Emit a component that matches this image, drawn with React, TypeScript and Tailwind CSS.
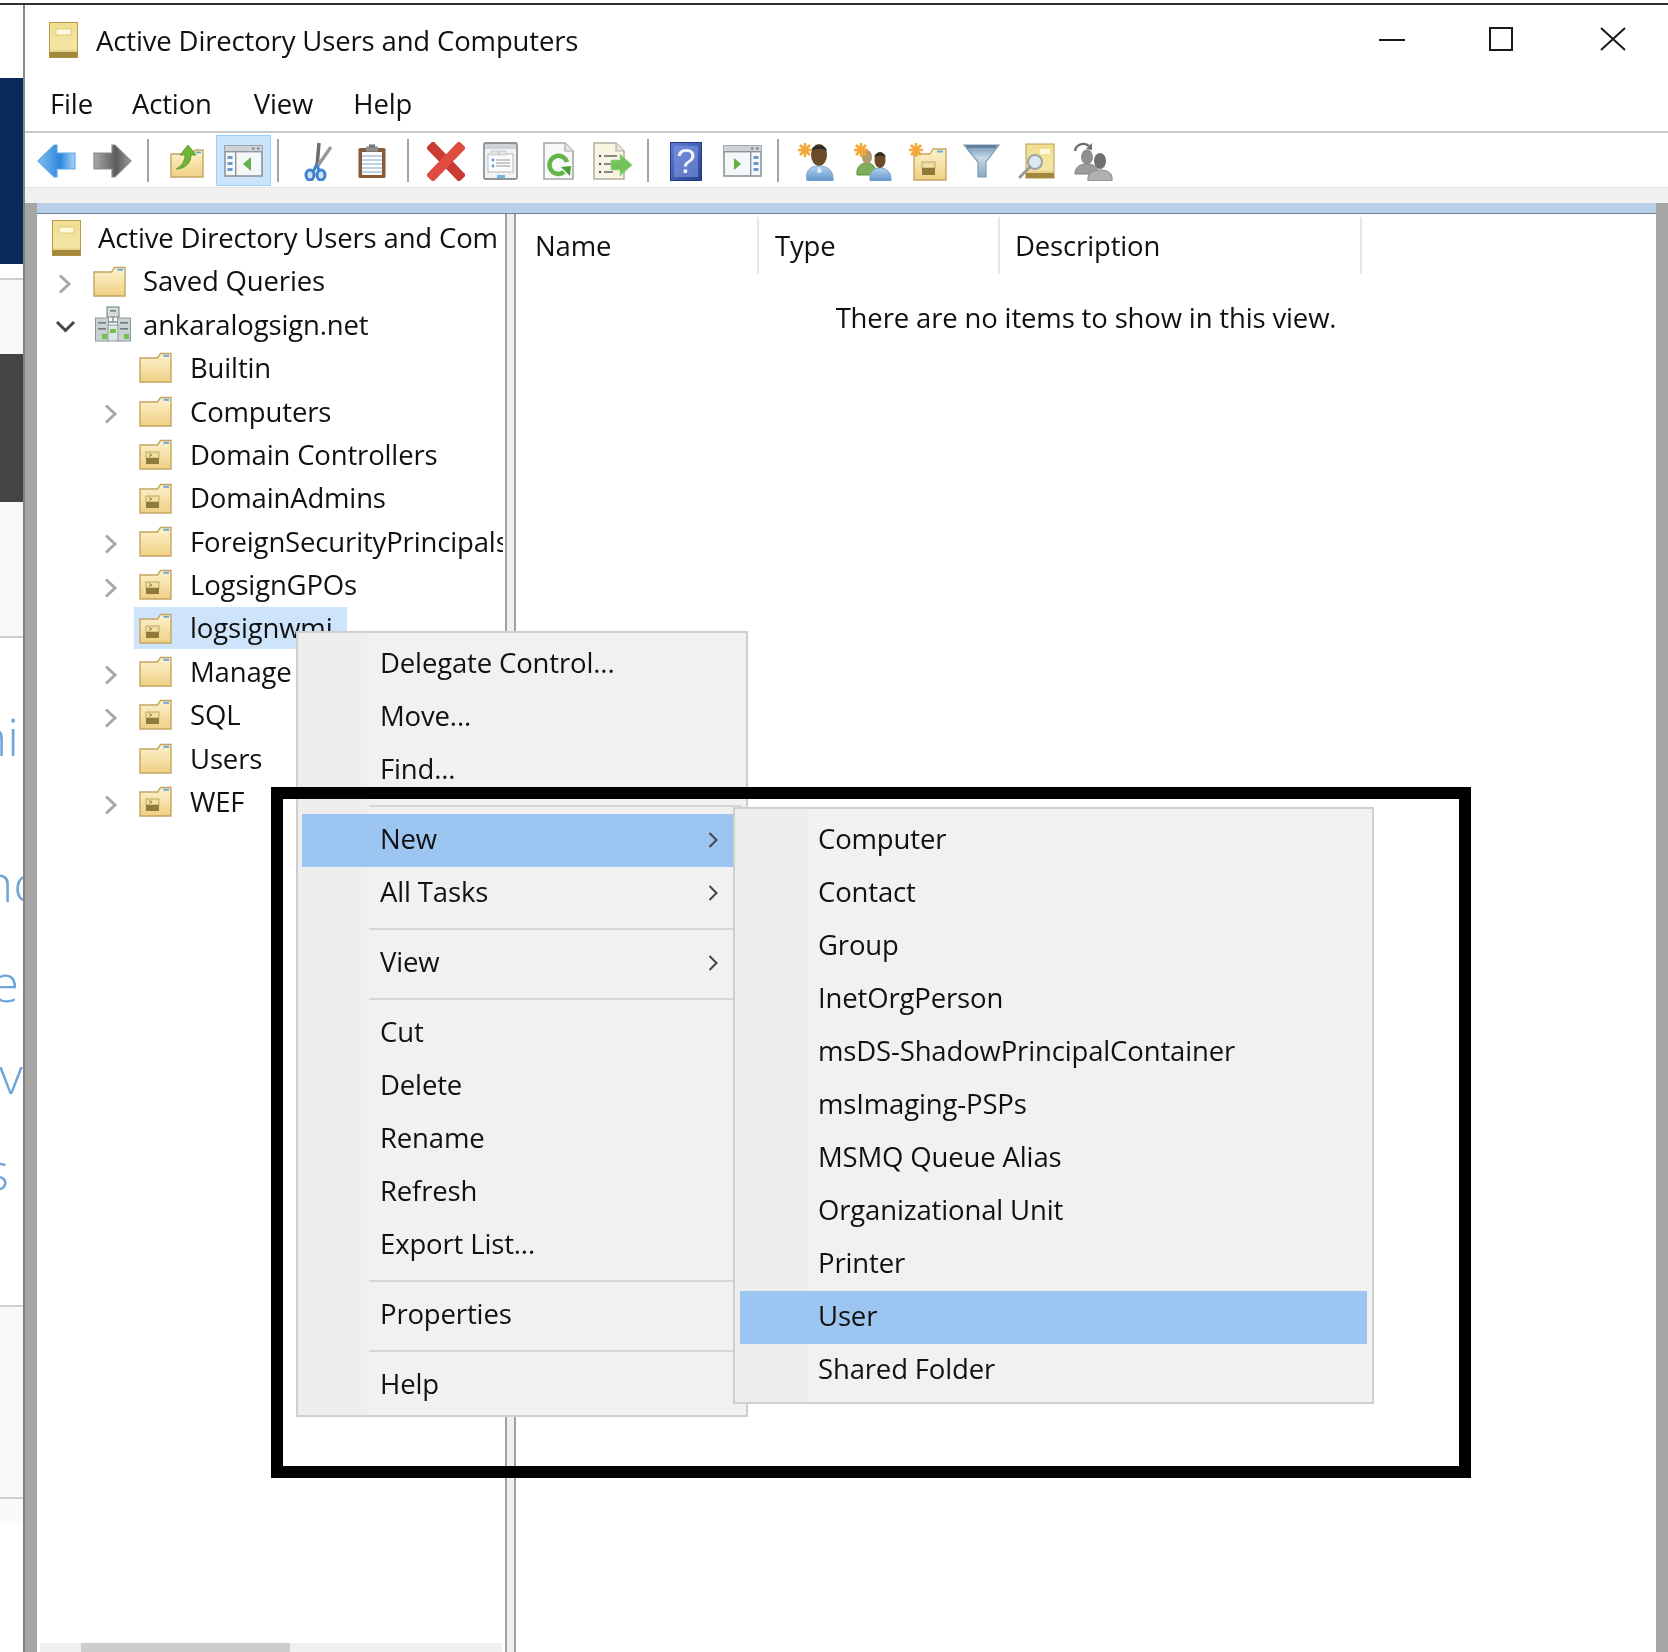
import React from "react"

type IconProps = { className?: string }

function Defs() {
  return (
    <svg className="absolute w-0 h-0">
      <defs>
        <linearGradient id="gFolder" x1="0" y1="0" x2="0" y2="1">
          <stop offset="0" stopColor="#fdf3cf" />
          <stop offset="1" stopColor="#f0d084" />
        </linearGradient>
        <linearGradient id="gBook" x1="0" y1="0" x2="0" y2="1">
          <stop offset="0" stopColor="#f0df90" />
          <stop offset="0.75" stopColor="#f4e6a6" />
          <stop offset="1" stopColor="#c9a84a" />
        </linearGradient>
        <linearGradient id="gBlue" x1="0" y1="0" x2="1" y2="0">
          <stop offset="0" stopColor="#7fbcf0" />
          <stop offset="0.6" stopColor="#2f86dc" />
          <stop offset="1" stopColor="#a8d4f7" />
        </linearGradient>
        <linearGradient id="gGray" x1="0" y1="0" x2="1" y2="0">
          <stop offset="0" stopColor="#a8a8a8" />
          <stop offset="0.6" stopColor="#5c5c5c" />
          <stop offset="1" stopColor="#9a9a9a" />
        </linearGradient>
        <linearGradient id="gBody" x1="0" y1="0" x2="0" y2="1">
          <stop offset="0" stopColor="#b5d4ef" />
          <stop offset="1" stopColor="#5f94c9" />
        </linearGradient>
        <linearGradient id="gSteel" x1="0" y1="0" x2="0" y2="1">
          <stop offset="0" stopColor="#6f93b4" />
          <stop offset="0.4" stopColor="#c6d9e8" />
          <stop offset="1" stopColor="#8aa7c0" />
        </linearGradient>
        <linearGradient id="gHelp" x1="0" y1="0" x2="1" y2="1">
          <stop offset="0" stopColor="#5e7fd8" />
          <stop offset="1" stopColor="#27408f" />
        </linearGradient>
      </defs>
    </svg>
  )
}

function Folder({ ou, className = "" }: { ou?: boolean; className?: string }) {
  return (
    <svg viewBox="0 0 33 31" className={`w-[33px] h-[31px] shrink-0 ${className}`}>
      <path d="M1 30V6H18.5L21.5 1.5H32V30Z" fill="url(#gFolder)" stroke="#c4a561" strokeWidth="1.4" />
      <rect x="24.5" y="2.8" width="5.5" height="2" fill="#6aa9dc" />
      {ou && (
        <>
          <rect x="7" y="13" width="13" height="6" fill="#efe0a4" stroke="#b39a52" strokeWidth="0.8" />
          <rect x="7" y="19" width="13" height="6" fill="#8f7a3c" />
          <path d="M10 14.5L13 16L10 17.5" fill="none" stroke="#8f7a3c" strokeWidth="0.9" />
        </>
      )}
    </svg>
  )
}

function BookIcon({ className = "" }: IconProps) {
  return (
    <svg viewBox="0 0 29 36" className={`w-[29px] h-[36px] shrink-0 ${className}`}>
      <rect x="0.5" y="0.5" width="28" height="35" fill="url(#gBook)" stroke="#b89b4a" />
      <rect x="0.5" y="30" width="28" height="5.5" fill="#a3873c" />
      <rect x="7" y="7" width="15" height="6" fill="#fff9de" stroke="#d8c270" strokeWidth="0.8" />
    </svg>
  )
}

function DomainIcon() {
  return (
    <svg viewBox="0 0 36 36" className="w-[36px] h-[36px] shrink-0">
      <path d="M18 10V16M6 16H30V20M6 16V20" fill="none" stroke="#7d8a8a" strokeWidth="1.4" />
      <rect x="12" y="1" width="12" height="10" fill="#d5dcdc" stroke="#6f7c7c" />
      <rect x="15" y="4" width="6" height="1.6" fill="#6f7c7c" />
      <rect x="0.5" y="12" width="13" height="23" fill="#c9d2d2" stroke="#8c9898" />
      <rect x="22.5" y="12" width="13" height="23" fill="#c9d2d2" stroke="#8c9898" />
      <rect x="13" y="19" width="10" height="16" fill="#dfe5e5" stroke="#8c9898" />
      <rect x="3" y="16" width="8" height="1.6" fill="#6f7c7c" />
      <rect x="25" y="16" width="8" height="1.6" fill="#6f7c7c" />
      <rect x="3" y="22" width="8" height="1.6" fill="#6f7c7c" />
      <rect x="25" y="22" width="8" height="1.6" fill="#6f7c7c" />
      <rect x="7" y="28" width="5" height="5" fill="#71c24d" />
      <rect x="15" y="23" width="6" height="4" fill="#71c24d" />
      <rect x="29" y="28" width="5" height="5" fill="#71c24d" />
    </svg>
  )
}

function BackIcon({ className = "" }: IconProps) {
  return (
    <svg viewBox="0 0 39 34" className={`w-[39px] h-[34px] shrink-0 ${className}`}>
      <path d="M1 17L17 1H20V9H38V25H20V33H17Z" fill="url(#gBlue)" stroke="#63a8e6" strokeWidth="1.2" />
    </svg>
  )
}

function ForwardIcon({ className = "" }: IconProps) {
  return (
    <svg viewBox="0 0 39 34" className={`w-[39px] h-[34px] shrink-0 ${className}`}>
      <path d="M38 17L22 1H19V9H1V25H19V33H22Z" fill="url(#gGray)" stroke="#8a8a8a" strokeWidth="1.2" />
    </svg>
  )
}

function UpFolderIcon({ className = "" }: IconProps) {
  return (
    <svg viewBox="0 0 34 34" className={`w-[34px] h-[34px] shrink-0 ${className}`}>
      <path d="M1 33V10H22L25 6H33V33Z" fill="url(#gFolder)" stroke="#c4a561" strokeWidth="1.4" />
      <rect x="26" y="7.5" width="5" height="1.8" fill="#6aa9dc" />
      <path d="M6 25C12 22 15 17 15 11H10L18 1L26 11H21C21 19 15 25 6 25Z" fill="#6fb536" stroke="#4f9426" strokeWidth="0.8" />
    </svg>
  )
}

function PaneIcon({ flip, className = "" }: { flip?: boolean; className?: string }) {
  return (
    <svg viewBox="0 0 39 32" className={`w-[39px] h-[32px] shrink-0 ${className}`}>
      <rect x="1" y="1" width="37" height="30" fill="#f6f7f8" stroke="#8e9499" strokeWidth="1.6" />
      <rect x="1" y="1" width="37" height="5" fill="#cfd3d6" />
      <rect x="28" y="2.5" width="2.5" height="2" fill="#7d8388" />
      <rect x="33" y="2.5" width="2.5" height="2" fill="#7d8388" />
      <rect x="1" y="6" width="37" height="1.4" fill="#8e9499" />
      {flip ? (
        <>
          <rect x="27" y="7" width="1.4" height="24" fill="#8e9499" />
          <rect x="30.5" y="11" width="5" height="3" fill="#6b9ad0" />
          <rect x="30.5" y="17" width="5" height="3" fill="#6b9ad0" />
          <rect x="30.5" y="23" width="5" height="3" fill="#6b9ad0" />
          <path d="M11 13L18 19L11 25Z" fill="#62b347" />
        </>
      ) : (
        <>
          <rect x="11" y="7" width="1.4" height="24" fill="#8e9499" />
          <rect x="3.5" y="11" width="5" height="3" fill="#6b9ad0" />
          <rect x="3.5" y="17" width="5" height="3" fill="#6b9ad0" />
          <rect x="3.5" y="23" width="5" height="3" fill="#6b9ad0" />
          <path d="M27 12L19 19L27 26Z" fill="#62b347" />
        </>
      )}
    </svg>
  )
}

function ScissorsIcon({ className = "" }: IconProps) {
  return (
    <svg viewBox="0 0 28 39" className={`w-[28px] h-[39px] shrink-0 ${className}`}>
      <path d="M15 1L13 24" stroke="#6d6d6d" strokeWidth="3.5" />
      <path d="M27 5L13 25" stroke="#9a9a9a" strokeWidth="3.5" />
      <path d="M13 22L9 30" stroke="#3f83cf" strokeWidth="3" />
      <path d="M12 22L16 30" stroke="#3f83cf" strokeWidth="3" />
      <ellipse cx="6" cy="33" rx="4" ry="5" fill="#cfe3f6" stroke="#3f83cf" strokeWidth="3" />
      <ellipse cx="17" cy="33" rx="4" ry="5" fill="#cfe3f6" stroke="#3f83cf" strokeWidth="3" />
    </svg>
  )
}

function ClipboardIcon({ className = "" }: IconProps) {
  return (
    <svg viewBox="0 0 30 35" className={`w-[30px] h-[35px] shrink-0 ${className}`}>
      <rect x="1.5" y="4" width="27" height="30" fill="#8a5a36" rx="1.5" />
      <rect x="5" y="8" width="20" height="23" fill="#fbfcfd" />
      <path d="M5 12H25M5 16H25M5 20H25M5 24H25M5 28H25" stroke="#a9c4dc" strokeWidth="1.6" />
      <rect x="9" y="2.5" width="12" height="5" fill="#8b8f92" />
      <rect x="12" y="0.5" width="6" height="3" fill="#6f7376" />
    </svg>
  )
}

function DeleteIcon({ className = "" }: IconProps) {
  return (
    <svg viewBox="0 0 38 39" className={`w-[38px] h-[39px] shrink-0 ${className}`}>
      <path d="M6 6L32 33" stroke="#c93b33" strokeWidth="10" strokeLinecap="square" />
      <path d="M32 6L6 33" stroke="#df4c42" strokeWidth="10" strokeLinecap="square" />
    </svg>
  )
}

function PropertiesIcon({ className = "" }: IconProps) {
  return (
    <svg viewBox="0 0 35 38" className={`w-[35px] h-[38px] shrink-0 ${className}`}>
      <rect x="1" y="1" width="33" height="36" rx="1.5" fill="#f1f2f3" stroke="#8f9498" strokeWidth="1.8" />
      <rect x="2" y="2" width="31" height="5" fill="#cfd3d6" />
      <rect x="5" y="12" width="25" height="18" fill="#fcfcfc" stroke="#b4b8bb" />
      <rect x="8" y="9" width="7" height="4" fill="#e3e5e7" stroke="#b4b8bb" strokeWidth="0.6" />
      <rect x="16" y="9" width="7" height="4" fill="#e3e5e7" stroke="#b4b8bb" strokeWidth="0.6" />
      <circle cx="10" cy="18" r="1.4" fill="#4c9ddd" />
      <circle cx="10" cy="24" r="1.4" fill="#4c9ddd" />
      <path d="M13 18H27M13 21H27M13 24H27" stroke="#8f9498" strokeWidth="1.2" />
      <rect x="14" y="33" width="8" height="3" fill="#6eb7e8" />
    </svg>
  )
}

function RefreshIcon({ className = "" }: IconProps) {
  return (
    <svg viewBox="0 0 31 38" className={`w-[31px] h-[38px] shrink-0 ${className}`}>
      <path d="M1 1H22L30 9V37H1Z" fill="#f7f8f7" stroke="#a4a8a6" strokeWidth="1.6" />
      <path d="M22 1V9H30" fill="#e7e9e8" stroke="#a4a8a6" strokeWidth="1.2" />
      <path d="M21 30A9 9 0 1 1 24 20" fill="none" stroke="#63b547" strokeWidth="4.5" />
      <path d="M18 25L28 24L27 34Z" fill="#4f9f38" />
    </svg>
  )
}

function ExportIcon({ className = "" }: IconProps) {
  return (
    <svg viewBox="0 0 40 38" className={`w-[40px] h-[38px] shrink-0 ${className}`}>
      <path d="M1 1H23L31 9V37H1Z" fill="#fbf6e3" stroke="#b0aea2" strokeWidth="1.5" />
      <path d="M23 1V9H31" fill="#eee8d0" stroke="#b0aea2" strokeWidth="1.2" />
      <path d="M6 14H8M6 22H8M6 30H8" stroke="#4a4a4a" strokeWidth="2" />
      <path d="M11 14H24M11 22H20M11 30H20" stroke="#8a8a80" strokeWidth="1.8" />
      <path d="M18 18H27V12L39 23L27 34V28H18Z" fill="#72c45a" stroke="#9ad98a" strokeWidth="0.8" />
    </svg>
  )
}

function HelpIcon({ className = "" }: IconProps) {
  return (
    <svg viewBox="0 0 32 39" className={`w-[32px] h-[39px] shrink-0 ${className}`}>
      <rect x="0.5" y="0.5" width="31" height="38" fill="url(#gHelp)" stroke="#22397f" />
      <rect x="4" y="4" width="24" height="31" fill="#7f9ae0" opacity="0.6" />
      <text x="16" y="31" textAnchor="middle" fontSize="35" fill="#f2f5fd" fontFamily="'Liberation Sans', sans-serif">?</text>
    </svg>
  )
}

function Star({ x, y }: { x: number; y: number }) {
  return (
    <g transform={`translate(${x} ${y})`} stroke="#f2a93a" strokeWidth="2.6">
      <path d="M0 -7V7M-7 0H7M-5 -5L5 5M-5 5L5 -5" />
    </g>
  )
}

function UserIcon({ className = "" }: IconProps) {
  return (
    <svg viewBox="0 0 37 39" className={`w-[37px] h-[39px] shrink-0 ${className}`}>
      <path d="M10 39C8 30 12 24 22 24C32 24 37 30 36 39Z" fill="url(#gBody)" stroke="#7ea6cc" />
      <path d="M22 24L20 31L25 30Z" fill="#e8f0f8" />
      <ellipse cx="22" cy="13" rx="8" ry="11" fill="#6b4a2c" />
      <path d="M14 9C16 2 28 1 30 9C26 6 19 6 14 9Z" fill="#2e2a28" />
      <Star x={8} y={8} />
    </svg>
  )
}

function GroupIcon({ className = "" }: IconProps) {
  return (
    <svg viewBox="0 0 39 39" className={`w-[39px] h-[39px] shrink-0 ${className}`}>
      <path d="M4 33C3 26 7 21 14 21C20 21 24 26 23 33Z" fill="#7eae59" stroke="#5e8f3e" />
      <ellipse cx="14" cy="15" rx="5" ry="7" fill="#b59a6e" />
      <path d="M17 39C16 31 20 26 27 26C34 26 39 31 38 39Z" fill="url(#gBody)" stroke="#7ea6cc" />
      <ellipse cx="27" cy="18" rx="5.5" ry="8" fill="#6b4a2c" />
      <path d="M21 15C23 9 31 9 33 15C29 13 25 13 21 15Z" fill="#2e2a28" />
      <Star x={8} y={8} />
    </svg>
  )
}

function NewOuIcon({ className = "" }: IconProps) {
  return (
    <svg viewBox="0 0 39 39" className={`w-[39px] h-[39px] shrink-0 ${className}`}>
      <path d="M6 38V12H22L25 7H38V38Z" fill="url(#gFolder)" stroke="#c4a561" strokeWidth="1.4" />
      <rect x="29" y="8.5" width="6" height="2" fill="#6aa9dc" />
      <rect x="14" y="20" width="13" height="6" fill="#efe0a4" stroke="#b39a52" strokeWidth="0.8" />
      <rect x="14" y="26" width="13" height="7" fill="#8f7a3c" />
      <Star x={8} y={8} />
    </svg>
  )
}

function FilterIcon({ className = "" }: IconProps) {
  return (
    <svg viewBox="0 0 37 34" className={`w-[37px] h-[34px] shrink-0 ${className}`}>
      <path d="M1 1H36L23 18V33H15V18Z" fill="url(#gSteel)" stroke="#7d9ab3" strokeWidth="1.2" />
      <path d="M4 2.5H33" stroke="#5d7b98" strokeWidth="2.5" />
    </svg>
  )
}

function FindIcon({ className = "" }: IconProps) {
  return (
    <svg viewBox="0 0 37 36" className={`w-[37px] h-[36px] shrink-0 ${className}`}>
      <rect x="8" y="1" width="28" height="34" fill="url(#gBook)" stroke="#b89b4a" />
      <rect x="8" y="30" width="28" height="5" fill="#a3873c" />
      <rect x="22" y="6" width="10" height="5" fill="#fff9de" />
      <circle cx="17" cy="19" r="7" fill="#dbe9f0" stroke="#9aa4a8" strokeWidth="2" />
      <path d="M12 24L2 34" stroke="#9a9a9a" strokeWidth="3" strokeLinecap="round" />
    </svg>
  )
}

function MoveIcon({ className = "" }: IconProps) {
  return (
    <svg viewBox="0 0 40 39" className={`w-[40px] h-[39px] shrink-0 ${className}`}>
      <path d="M2 32C2 25 7 22 14 22C21 22 25 25 25 32Z" fill="#9c9c9c" stroke="#7f7f7f" />
      <ellipse cx="14" cy="15" rx="6" ry="7.5" fill="#8e8e8e" />
      <path d="M15 39C14 31 19 28 27 28C35 28 40 31 39 39Z" fill="#b0b0b0" stroke="#8a8a8a" />
      <ellipse cx="27" cy="19" rx="6" ry="8" fill="#707070" />
      <path d="M2 9C3 2 11 0 16 4" fill="none" stroke="#6f6f6f" strokeWidth="2.4" />
      <path d="M13 7L19 1L19 8Z" fill="#6f6f6f" />
    </svg>
  )
}

function ToolSep({ className = "" }: IconProps) {
  return <div className={`w-[2px] h-[43px] -mt-[2px] bg-[#a3a3a3] shrink-0 ${className}`} />
}

function Chevron({ open }: { open?: boolean }) {
  if (open) {
    return (
      <svg viewBox="0 0 21 13" className="w-[21px] h-[13px] -ml-[3px] mt-[4px]">
        <path d="M2 2L10.5 10.5L19 2" fill="none" stroke="#454545" strokeWidth="3" />
      </svg>
    )
  }
  return (
    <svg viewBox="0 0 15 22" className="w-[15px] h-[22px] mt-[6px]">
      <path d="M3 2.5L12 11L3 19.5" fill="none" stroke="#a8a8a8" strokeWidth="3" />
    </svg>
  )
}

const tree = [
  { label: "Builtin", ou: false, arrow: false },
  { label: "Computers", ou: false, arrow: true },
  { label: "Domain Controllers", ou: true, arrow: false },
  { label: "DomainAdmins", ou: true, arrow: false },
  { label: "ForeignSecurityPrincipals", ou: false, arrow: true },
  { label: "LogsignGPOs", ou: true, arrow: true },
  { label: "logsignwmi", ou: true, arrow: false, selected: true },
  { label: "Manage", ou: false, arrow: true },
  { label: "SQL", ou: true, arrow: true },
  { label: "Users", ou: false, arrow: false },
  { label: "WEF", ou: true, arrow: true },
]

function MenuItem({ label, active, arrow }: { label: string; active?: boolean; arrow?: boolean }) {
  return (
    <div className={`h-[53px] flex items-center pl-[78px] pr-[24px] ${active ? "bg-[#9cc6f1]" : ""}`}>
      <span className="flex-1 -mt-[3px]">{label}</span>
      {arrow && (
        <svg viewBox="0 0 10 16" className="w-[10px] h-[16px] -mt-[2px]">
          <path d="M1.5 1L8.5 8L1.5 15" fill="none" stroke="#444444" strokeWidth="2" />
        </svg>
      )}
    </div>
  )
}

function MenuSep({ className = "" }: IconProps) {
  return (
    <div className={`h-[17px] flex items-center ${className}`}>
      <div className="h-[2px] w-full bg-[#d6d6d6]" />
    </div>
  )
}

const subItems = [
  "Computer",
  "Contact",
  "Group",
  "InetOrgPerson",
  "msDS-ShadowPrincipalContainer",
  "msImaging-PSPs",
  "MSMQ Queue Alias",
  "Organizational Unit",
  "Printer",
  "User",
  "Shared Folder",
]

export default function App() {
  return (
    <div className="relative w-[1668px] h-[1652px] overflow-hidden bg-white text-[27.5px] leading-none text-[#111111] tracking-[-0.15px] blur-[0.6px] font-['Open_Sans',sans-serif]">
      <Defs />
      <div className="h-[3px] bg-white" />
      <div className="h-[2px] bg-[#2e3338]" />
      <div className="flex h-[1647px]">
        {/* what is left of the page behind the window */}
        <div className="w-[23px] shrink-0 flex flex-col overflow-hidden text-[#6ea6da] text-[52px] font-light tracking-normal">
          <div className="h-[73px] bg-white shrink-0" />
          <div className="h-[186px] bg-[#0b2a5c] shrink-0" />
          <div className="h-[16px] bg-white border-b-2 border-[#cfcfcf] shrink-0" />
          <div className="h-[74px] bg-[#f8f8f8] shrink-0" />
          <div className="h-[148px] bg-[#444444] shrink-0" />
          <div className="h-[136px] bg-[#f8f8f8] border-b-2 border-[#cfcfcf] shrink-0" />
          <div className="h-[50px] shrink-0" />
          <div className="h-[96px] shrink-0 flex items-center justify-end pr-[4px] whitespace-nowrap">ni</div>
          <div className="h-[50px] shrink-0" />
          <div className="h-[96px] shrink-0 flex items-center justify-end -mr-[15px] whitespace-nowrap">nc</div>
          <div className="h-[96px] shrink-0 flex items-center justify-end pr-[4px] pt-[8px] whitespace-nowrap">e</div>
          <div className="h-[96px] shrink-0 flex items-center justify-end whitespace-nowrap">rv</div>
          <div className="h-[96px] shrink-0 flex items-center justify-end pr-[14px] whitespace-nowrap">s</div>
          <div className="h-[89px] shrink-0 border-b-2 border-[#cfcfcf]" />
          <div className="h-[192px] bg-[#f8f8f8] border-b-2 border-[#cfcfcf] shrink-0" />
          <div className="h-[24px] bg-[#fafafa] shrink-0" />
        </div>

        <div className="flex-1 flex flex-col min-w-0">
          <div className="border-l-2 border-[#8a8a8a] shrink-0">
            <div className="h-[73px] flex items-center pl-[24px] pr-[42px]">
              <BookIcon className="-mt-[3px]" />
              <span className="ml-[18px] -mt-[2px]">Active Directory Users and Computers</span>
              <div className="ml-auto w-[26px] h-[2px] bg-[#1a1a1a] -mt-[3px]" />
              <div className="ml-[84px] w-[24px] h-[24px] border-2 border-[#1a1a1a] -mt-[5px]" />
              <svg viewBox="0 0 26 24" className="ml-[87px] w-[26px] h-[24px] -mt-[5px]">
                <path d="M1 1L25 23M25 1L1 23" stroke="#1a1a1a" strokeWidth="2" />
              </svg>
            </div>
            <div className="h-[53px] flex items-center pl-[25px] pb-[2px]">
              <span>File</span>
              <span className="ml-[39px]">Action</span>
              <span className="ml-[42px]">View</span>
              <span className="ml-[40px]">Help</span>
            </div>
            <div className="h-[2px] bg-[#c9c9c9]" />
            <div className="h-[54px] flex items-center pt-[2px]">
              <BackIcon className="ml-[12px]" />
              <ForwardIcon className="ml-[17px]" />
              <ToolSep className="ml-[15px]" />
              <UpFolderIcon className="ml-[21px]" />
              <div className="ml-[12px] w-[55px] h-[51px] -mt-[2px] shrink-0 bg-[#cce4fb] border border-[#99d1ff] flex items-center justify-center">
                <PaneIcon className="mt-[2px]" />
              </div>
              <ToolSep className="ml-[6px]" />
              <ScissorsIcon className="ml-[25px]" />
              <ClipboardIcon className="ml-[25px]" />
              <ToolSep className="ml-[20px]" />
              <DeleteIcon className="ml-[18px]" />
              <PropertiesIcon className="ml-[18px]" />
              <RefreshIcon className="ml-[25px]" />
              <ExportIcon className="ml-[19px]" />
              <ToolSep className="ml-[14px]" />
              <HelpIcon className="ml-[21px]" />
              <PaneIcon flip className="ml-[21px]" />
              <ToolSep className="ml-[15px]" />
              <UserIcon className="ml-[18px]" />
              <GroupIcon className="ml-[19px]" />
              <NewOuIcon className="ml-[16px]" />
              <FilterIcon className="ml-[16px]" />
              <FindIcon className="ml-[18px]" />
              <MoveIcon className="ml-[18px]" />
            </div>
            <div className="h-[1px] bg-[#e3e3e3]" />
            <div className="h-[15px] bg-[#f0f0f0]" />
          </div>

          <div className="flex-1 flex min-h-0">
            <div className="w-[14px] shrink-0 bg-[#a6a6a6] border-l-2 border-[#808080]" />
            <div className="flex-1 flex flex-col min-w-0">
              <div className="h-[10px] bg-[#b9d0e8] shrink-0" />
              <div className="h-[1px] bg-[#6e7f90] shrink-0" />
              <div className="flex-1 flex min-h-0">
                <div className="w-[468px] shrink-0 flex flex-col overflow-hidden pt-[2px] pr-[2px]">
                  <div className="h-[43.4px] flex items-center pl-[15px] whitespace-nowrap shrink-0">
                    <BookIcon />
                    <span className="ml-[17px] w-[402px] overflow-hidden leading-[34px]">Active Directory Users and Computers</span>
                  </div>
                  <div className="h-[43.4px] flex items-center pl-[20px] shrink-0">
                    <div className="w-[36px] shrink-0">
                      <Chevron />
                    </div>
                    <Folder />
                    <span className="ml-[17px]">Saved Queries</span>
                  </div>
                  <div className="h-[43.4px] flex items-center pl-[21px] shrink-0">
                    <div className="w-[37px] shrink-0">
                      <Chevron open />
                    </div>
                    <DomainIcon />
                    <span className="ml-[12px]">ankaralogsign.net</span>
                  </div>
                  {tree.map((row) => (
                    <div key={row.label} className="h-[43.4px] flex items-center pl-[66px] whitespace-nowrap overflow-hidden shrink-0">
                      <div className="w-[31px] shrink-0">{row.arrow && <Chevron />}</div>
                      <div className={`flex items-center h-[42px] pl-[5px] w-[213px] ${row.selected ? "bg-[#cde4fa]" : ""}`}>
                        <Folder ou={row.ou} />
                        <span className="ml-[18px]">{row.label}</span>
                      </div>
                    </div>
                  ))}
                  <div className="flex-1" />
                  <div className="h-[9px] ml-[3px] mr-[1px] bg-[#f0f0f0] shrink-0">
                    <div className="h-full w-[209px] ml-[41px] bg-[#cdcdcd]" />
                  </div>
                </div>
                <div className="w-[11px] shrink-0 bg-[#f0f0f0] border-x-2 border-[#a0a0a0]" />
                <div className="flex-1 min-w-0">
                  <div className="flex h-[60px] pt-[3px]">
                    <div className="w-[243px] pl-[19px] flex items-center border-r-2 border-[#e8e8e8]">Name</div>
                    <div className="w-[241px] pl-[16px] flex items-center border-r-2 border-[#e8e8e8]">Type</div>
                    <div className="w-[362px] pl-[15px] flex items-center border-r-2 border-[#e8e8e8]">Description</div>
                  </div>
                  <div className="mt-[30px] text-center">There are no items to show in this view.</div>
                </div>
              </div>
            </div>
            <div className="w-[12px] shrink-0 bg-[#a6a6a6]" />
          </div>
        </div>
      </div>

      {/* context menu */}
      <div className="absolute left-[296px] top-[631px] w-[452px] pt-[5px] pb-[3px] px-[4px] border-2 border-[#cfcfcf] bg-[linear-gradient(90deg,#eeeeee_69px,#f1f1f1_69px)]">
        <MenuItem label="Delegate Control..." />
        <MenuItem label="Move..." />
        <MenuItem label="Find..." />
        <MenuSep className="pl-[67px]" />
        <MenuItem label="New" active arrow />
        <MenuItem label="All Tasks" arrow />
        <MenuSep className="pl-[67px]" />
        <MenuItem label="View" arrow />
        <MenuSep className="pl-[67px]" />
        <MenuItem label="Cut" />
        <MenuItem label="Delete" />
        <MenuItem label="Rename" />
        <MenuItem label="Refresh" />
        <MenuItem label="Export List..." />
        <MenuSep className="pl-[67px]" />
        <MenuItem label="Properties" />
        <MenuSep className="pl-[67px]" />
        <MenuItem label="Help" />
      </div>

      {/* submenu of New */}
      <div className="absolute left-[733px] top-[807px] w-[641px] py-[5px] px-[5px] border-2 border-[#cfcfcf] bg-[linear-gradient(90deg,#eeeeee_73px,#f1f1f1_73px)]">
        {subItems.map((item) => (
          <MenuItem key={item} label={item} active={item === "User"} />
        ))}
      </div>

      {/* annotation frame */}
      <div className="absolute left-[271px] top-[787px] w-[1200px] h-[691px] border-[12px] border-black" />
    </div>
  )
}
